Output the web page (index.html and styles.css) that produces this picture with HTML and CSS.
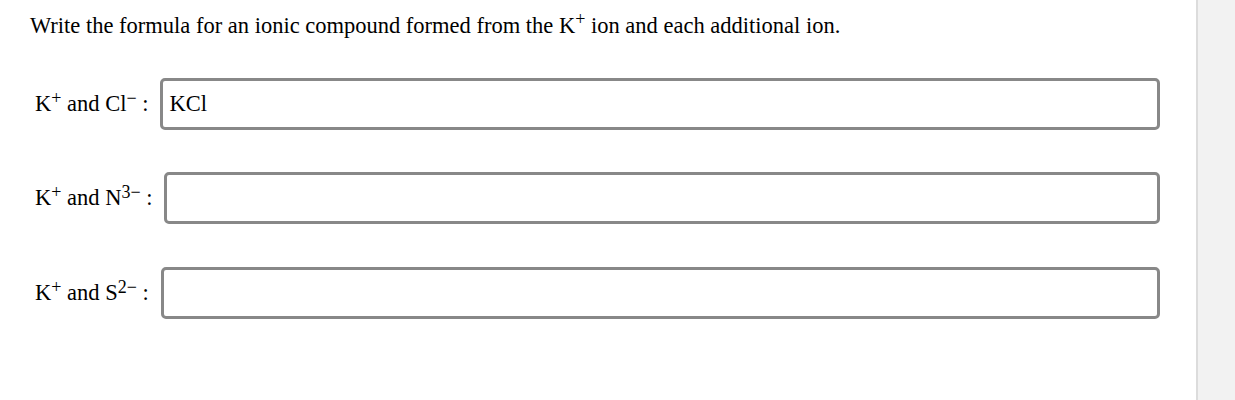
FILE: index.html
```html
<!DOCTYPE html>
<html>
<head>
<meta charset="utf-8">
<link rel="stylesheet" href="styles.css">
</head>
<body>
<div class="page">
  <div class="main">
    <p class="prompt">Write the formula for an ionic compound formed from the K<sup>+</sup> ion and each additional ion.</p>
    <div class="row r1">
      <span class="label">K<sup>+</sup> and Cl<sup>−</sup> :</span>
      <div class="box">KCl</div>
    </div>
    <div class="row r2">
      <span class="label">K<sup>+</sup> and N<sup>3−</sup> :</span>
      <div class="box"></div>
    </div>
    <div class="row r3">
      <span class="label">K<sup>+</sup> and S<sup>2−</sup> :</span>
      <div class="box"></div>
    </div>
  </div>
  <div class="side"></div>
</div>
</body>
</html>
```
FILE: styles.css
```css
html, body {
  margin: 0;
  padding: 0;
  background: #fff;
}
.page {
  display: flex;
  height: 400px;
  font-family: "Liberation Serif", "Times New Roman", serif;
  color: #000;
}
.main {
  width: 1196px;
  padding: 0 36px 0 30px;
  box-sizing: border-box;
}
.side {
  flex: 1;
  background: #f2f2f2;
  border-left: 2px solid #dcdcdc;
}
.prompt {
  margin: 12px 0 0 0;
  font-size: 22.5px;
  line-height: 28px;
}
.prompt sup {
  font-size: 18px;
  vertical-align: 8px;
}
sup {
  font-size: 18px;
  line-height: 0;
  vertical-align: 7px;
}
.row {
  display: flex;
  align-items: center;
  padding-left: 5px;
  height: 52px;
}
.r1 { margin-top: 38px; }
.r2 { margin-top: 42px; }
.r3 { margin-top: 43px; }
.label {
  font-size: 22.5px;
  margin-right: 12px;
  white-space: nowrap;
}
.box {
  flex: 1;
  height: 52px;
  box-sizing: border-box;
  border: 3px solid #888;
  border-radius: 5px;
  font-size: 22.5px;
  line-height: 46px;
  padding-left: 6px;
}
```
